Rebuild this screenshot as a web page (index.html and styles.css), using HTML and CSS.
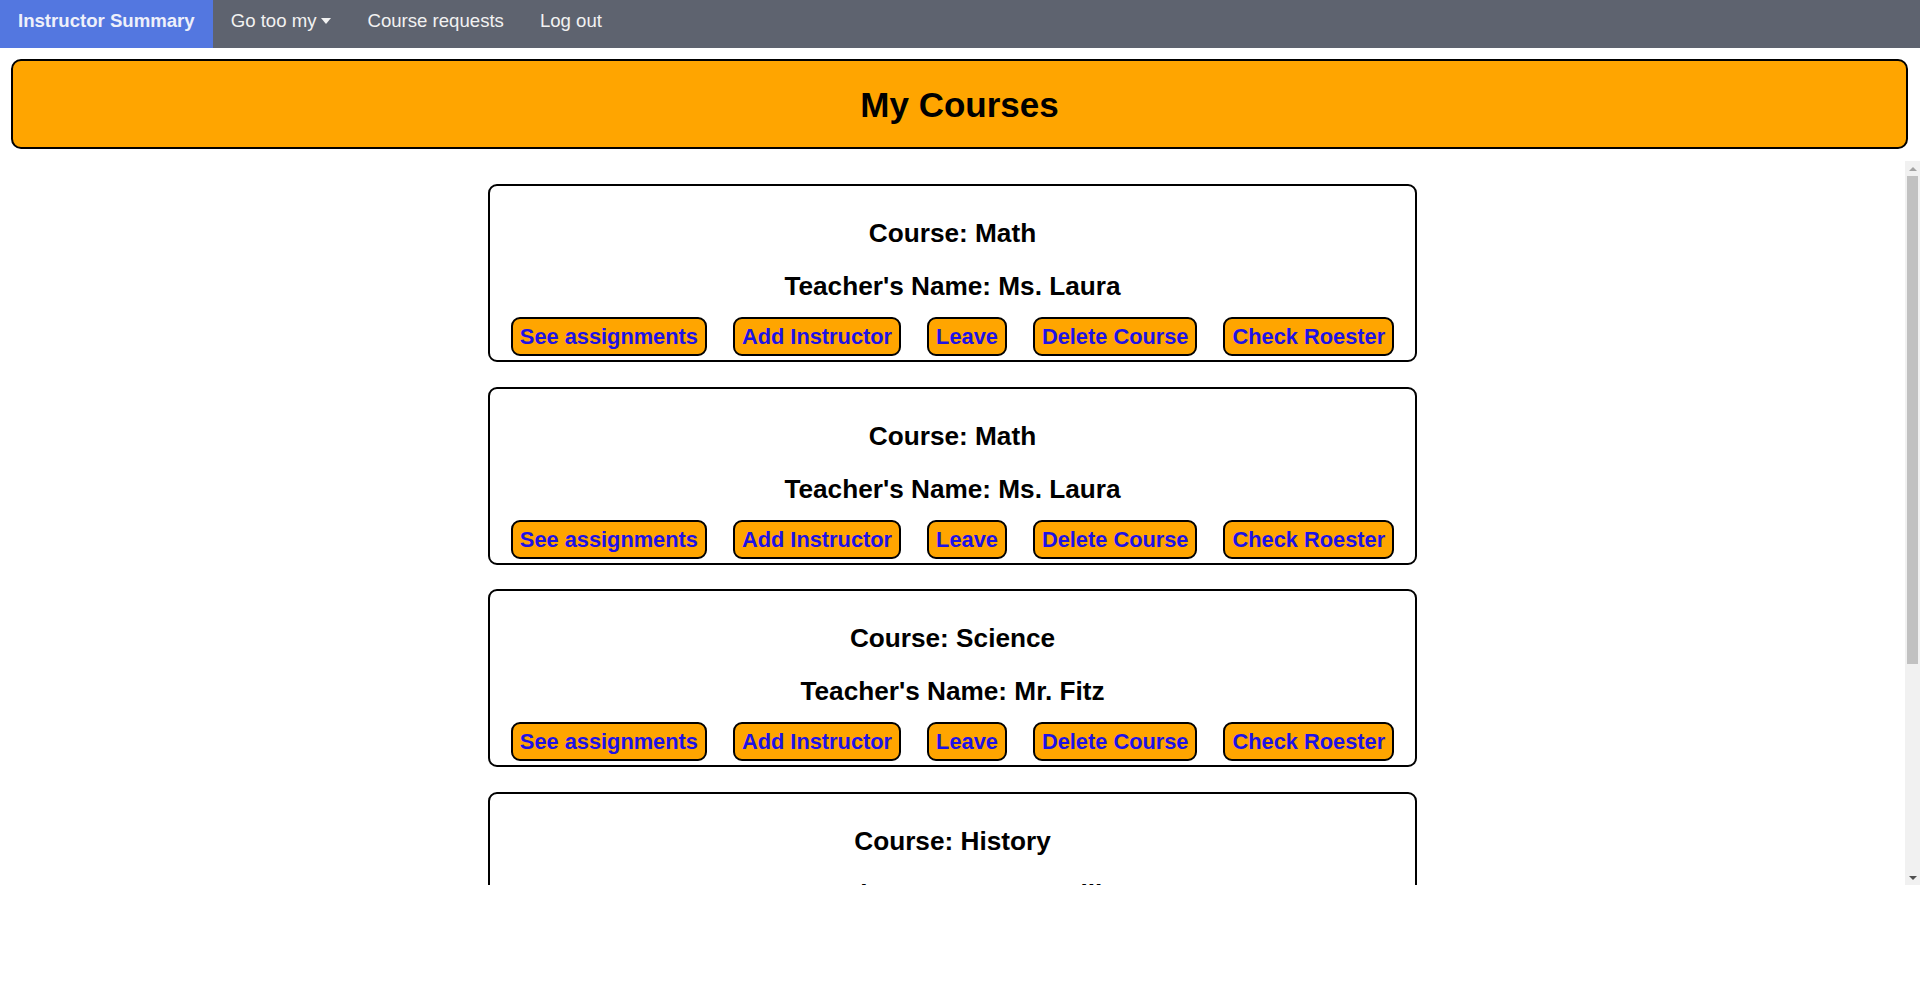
FILE: index.html
```html
<!DOCTYPE html>
<html lang="en">
<head>
<meta charset="utf-8">
<title>My Courses</title>
<link rel="stylesheet" href="styles.css">
</head>
<body>
<nav class="navbar">
  <a class="nav-brand" href="#">Instructor Summary</a>
  <a class="nav-item" href="#">Go too my<svg class="caret" width="10" height="6" viewBox="0 0 10 6"><path d="M0 0 L10 0 L5 6 Z" fill="#f2f2f2"/></svg></a>
  <a class="nav-item" href="#">Course requests</a>
  <a class="nav-item" href="#">Log out</a>
</nav>
<header class="page-header">
  <h1 class="page-title">My Courses</h1>
</header>
<main class="scroll-area">
  <div class="viewport">
    <div class="course-list">
      <section class="course-card">
        <h2 class="course-line">Course: Math</h2>
        <h2 class="teacher-line">Teacher's Name: Ms. Laura</h2>
        <div class="actions">
          <button class="btn">See assignments</button>
          <button class="btn">Add Instructor</button>
          <button class="btn">Leave</button>
          <button class="btn">Delete Course</button>
          <button class="btn">Check Roester</button>
        </div>
      </section>
      <section class="course-card">
        <h2 class="course-line">Course: Math</h2>
        <h2 class="teacher-line">Teacher's Name: Ms. Laura</h2>
        <div class="actions">
          <button class="btn">See assignments</button>
          <button class="btn">Add Instructor</button>
          <button class="btn">Leave</button>
          <button class="btn">Delete Course</button>
          <button class="btn">Check Roester</button>
        </div>
      </section>
      <section class="course-card">
        <h2 class="course-line">Course: Science</h2>
        <h2 class="teacher-line">Teacher's Name: Mr. Fitz</h2>
        <div class="actions">
          <button class="btn">See assignments</button>
          <button class="btn">Add Instructor</button>
          <button class="btn">Leave</button>
          <button class="btn">Delete Course</button>
          <button class="btn">Check Roester</button>
        </div>
      </section>
      <section class="course-card">
        <h2 class="course-line">Course: History</h2>
        <h2 class="teacher-line">Teacher's Name: Mr. Hill</h2>
        <div class="actions">
          <button class="btn">See assignments</button>
          <button class="btn">Add Instructor</button>
          <button class="btn">Leave</button>
          <button class="btn">Delete Course</button>
          <button class="btn">Check Roester</button>
        </div>
      </section>
    </div>
  </div>
  <div class="scrollbar" aria-hidden="true">
    <div class="sb-button"><svg width="8" height="4" viewBox="0 0 8 4"><path d="M0 4 L8 4 L4 0 Z" fill="#a3a3a3"/></svg></div>
    <div class="sb-track"><div class="sb-thumb"></div></div>
    <div class="sb-button"><svg width="8" height="4" viewBox="0 0 8 4"><path d="M0 0 L8 0 L4 4 Z" fill="#505050"/></svg></div>
  </div>
</main>
</body>
</html>
```
FILE: styles.css
```css
* { box-sizing: border-box; }
html, body { margin: 0; padding: 0; background: #ffffff; }
body {
  font-family: "Liberation Sans", Arial, sans-serif;
  color: #000;
  height: 988px;
  overflow: hidden;
}
.navbar {
  display: flex;
  align-items: flex-start;
  height: 48px;
  background: #5e636f;
}
.nav-brand, .nav-item {
  display: flex;
  align-items: center;
  height: 48px;
  padding: 10px 18px 17px 18px;
  font-size: 18.6px;
  line-height: 21px;
  color: #f2f2f2;
  text-decoration: none;
}
.nav-brand {
  background: #5377e0;
  font-weight: bold;
  color: #eef0fa;
}
.caret { margin-left: 5px; margin-top: 1px; }
.page-header {
  margin: 11px 12px 0 11px;
  height: 90px;
  padding-top: 2px;
  background: #ffa500;
  border: 2px solid #000;
  border-radius: 10px;
  display: flex;
  align-items: center;
  justify-content: center;
}
.page-title {
  margin: 0;
  font-size: 35px;
  line-height: 40px;
  font-weight: bold;
}
.scroll-area {
  margin-top: 12px;
  height: 724px;
  display: flex;
}
.viewport {
  flex: 1;
  overflow: hidden;
}
.scrollbar {
  width: 15px;
  display: flex;
  flex-direction: column;
  background: #f1f1f1;
}
.sb-button {
  height: 15px;
  display: flex;
  align-items: center;
  justify-content: center;
}
.sb-track {
  flex: 1;
  padding: 0 2px;
}
.sb-thumb {
  height: 488px;
  background: #c1c1c1;
}
.course-list {
  padding-top: 23px;
  display: flex;
  flex-direction: column;
  align-items: center;
  gap: 24.5px;
}
.course-card {
  width: 929px;
  border: 2px solid #000;
  border-radius: 9px;
  padding: 32px 0 4px 0;
  text-align: center;
  flex-shrink: 0;
}
.course-line, .teacher-line {
  margin: 0;
  font-size: 26.2px;
  line-height: 30px;
  font-weight: bold;
}
.teacher-line { margin-top: 23px; }
.actions {
  margin-top: 16px;
  display: flex;
  justify-content: center;
  gap: 26px;
}
.btn {
  height: 39px;
  padding: 0 7px;
  font-family: "Liberation Sans", Arial, sans-serif;
  font-size: 21.8px;
  line-height: 35px;
  font-weight: bold;
  color: #1e12e6;
  background: #ffa500;
  border: 2px solid #000;
  border-radius: 9px;
}
```
